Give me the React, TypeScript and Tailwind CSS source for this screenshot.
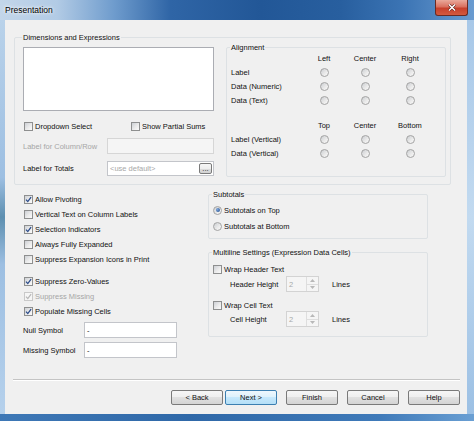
import React from "react";

function Check({ checked = false, disabled = false }: { checked?: boolean; disabled?: boolean }) {
  return (
    <span
      className={
        disabled
          ? "w-[9px] h-[9px] shrink-0 flex items-center justify-center border border-[#c9c9c9] bg-[#f6f6f6]"
          : "w-[9px] h-[9px] shrink-0 flex items-center justify-center border border-[#8e8f8f] bg-[linear-gradient(135deg,#cdd0d5_0%,#ebebeb_55%,#fbfbfb_100%)]"
      }
    >
      {checked && (
        <svg width="7" height="7" viewBox="0 0 7 7">
          <path d="M1 3.6 L2.8 5.6 L6.1 1.2" fill="none" stroke={disabled ? "#b8b8b8" : "#2b4b8a"} strokeWidth="1.3" />
        </svg>
      )}
    </span>
  );
}

function Radio({ checked = false }: { checked?: boolean }) {
  return (
    <span className="w-[9px] h-[9px] rounded-full shrink-0 flex items-center justify-center border border-[#a3a3a3] bg-[linear-gradient(135deg,#cbced2_0%,#e9e9e9_55%,#fbfbfb_100%)]">
      {checked && <span className="w-[4px] h-[4px] rounded-full bg-[radial-gradient(circle_at_35%_35%,#7fa6dc,#1d4a8a)]" />}
    </span>
  );
}

function CheckRow({ label, checked = false, disabled = false }: { label: string; checked?: boolean; disabled?: boolean }) {
  return (
    <div className="h-[15px] flex items-center gap-[2px] ml-[1px]">
      <Check checked={checked} disabled={disabled} />
      <span className={disabled ? "text-[#a6a6a6]" : ""}>{label}</span>
    </div>
  );
}

function Group({
  label,
  className,
  children,
}: {
  label: string;
  className: string;
  children?: React.ReactNode;
}) {
  return (
    <div className={"relative border border-[#dde1e4] rounded-[2px] " + className}>
      <span className="absolute left-[3px] top-[-5px] px-[1px] bg-[#f0f0f0] leading-[9px]">{label}</span>
      {children}
    </div>
  );
}

function Spinner() {
  return (
    <div className="w-[33px] h-full flex border border-[#d3d3d3] bg-[#f5f5f5]">
      <span className="flex-1 pl-[2px] text-[#a8a8a8] flex items-center">2</span>
      <div className="w-[12px] flex flex-col border-l border-[#dedede]">
        <span className="flex-1 flex items-center justify-center border-b border-[#dedede]">
          <svg width="5" height="3" viewBox="0 0 5 3">
            <path d="M0 3 L2.5 0 L5 3Z" fill="#b8b8b8" />
          </svg>
        </span>
        <span className="flex-1 flex items-center justify-center">
          <svg width="5" height="3" viewBox="0 0 5 3">
            <path d="M0 0 L2.5 3 L5 0Z" fill="#b8b8b8" />
          </svg>
        </span>
      </div>
    </div>
  );
}

function Btn({ label, focus = false, className = "" }: { label: string; focus?: boolean; className?: string }) {
  return (
    <div
      className={
        (focus
          ? "border-[#3c7fb1] bg-[linear-gradient(#eef7fd_0%,#ddf1fc_50%,#c6e8fc_50%,#b4dff7_100%)] "
          : "border-[#7a7a7a] bg-[linear-gradient(#f6f6f6_0%,#eeeeee_50%,#e0e0e0_50%,#d4d4d4_100%)] ") +
        "w-[52px] h-[15px] rounded-[2px] border flex items-center justify-center " +
        className
      }
    >
      {label}
    </div>
  );
}

const ALIGN_ROW = "h-[14px] flex items-center";

function AlignRow({ label }: { label: string }) {
  return (
    <div className={ALIGN_ROW}>
      <span className="w-[73px]">{label}</span>
      <span className="w-[40px] flex justify-center">
        <Radio />
      </span>
      <span className="w-[42px] flex justify-center">
        <Radio />
      </span>
      <span className="w-[48px] flex justify-center">
        <Radio />
      </span>
    </div>
  );
}

function AlignHead({ a, b, c }: { a: string; b: string; c: string }) {
  return (
    <div className={ALIGN_ROW}>
      <span className="w-[73px]" />
      <span className="w-[40px] text-center">{a}</span>
      <span className="w-[42px] text-center">{b}</span>
      <span className="w-[48px] text-center">{c}</span>
    </div>
  );
}

export default function App() {
  return (
    <div className="w-[474px] h-[421px] overflow-hidden flex flex-col font-['Liberation_Sans',Arial,sans-serif] text-[7.5px] leading-[9px] text-[#111111] bg-[#8fb5dd]">
      {/* Title bar */}
      <div className="h-[20px] flex items-start bg-[linear-gradient(90deg,#c3d6ea_0%,#b2cbe5_12%,#6f9ccd_24%,#2f65a6_36%,#225797_55%,#285f9f_72%,#3b74b4_85%,#6a9bd0_100%)]">
        <span className="pl-[5px] pt-[5px] text-[8.5px] leading-[10px] text-black [text-shadow:0_0_5px_#ffffff,0_0_3px_#ffffff]">
          Presentation
        </span>
        <div className="ml-auto mr-[6px] w-[33px] h-[16px] rounded-b-[3px] border border-t-0 border-[#6b2a22] bg-[linear-gradient(#e9a99b_0%,#d9705f_45%,#c7402c_55%,#d35a3f_100%)] flex items-center justify-center">
          <svg width="8" height="7" viewBox="0 0 8 7">
            <path d="M1 0.5 L7 6.5 M7 0.5 L1 6.5" stroke="#5a1d15" strokeWidth="2.6" />
            <path d="M1 0.5 L7 6.5 M7 0.5 L1 6.5" stroke="#ffffff" strokeWidth="1.5" />
          </svg>
        </div>
      </div>

      <div className="flex h-[394px]">
        <div className="w-[5px] bg-[linear-gradient(#b9d2ea_0%,#9dbfe2_40%,#5d8fb0_50%,#9dbfe2_62%,#b6d1ec_100%)]" />
        {/* Client area */}
        <div className="w-[462px] bg-[#f0f0f0] flex flex-col">
          {/* Top group */}
          <Group label="Dimensions and Expressions" className="mt-[17px] ml-[9px] w-[437px] h-[148px] [&>span:first-child]:left-[7px]">
            <div className="flex pt-[9px] pl-[8px]">
              <div className="w-[191px] flex flex-col">
                <div className="h-[64px] bg-white border border-[#abadb3]" />
                <div className="mt-[10px] h-[10px] flex items-center">
                  <div className="w-[107px] flex items-center gap-[2px] ml-[1px]">
                    <Check />
                    <span>Dropdown Select</span>
                  </div>
                  <div className="flex items-center gap-[2px]">
                    <Check />
                    <span>Show Partial Sums</span>
                  </div>
                </div>
                <div className="mt-[7px] h-[16px] flex items-center">
                  <span className="w-[84px] text-[#a6a6a6]">Label for Column/Row</span>
                  <div className="w-[107px] h-full border border-[#d6d6d6] bg-[#f5f5f5]" />
                </div>
                <div className="mt-[7px] h-[15px] flex items-center">
                  <span className="w-[84px]">Label for Totals</span>
                  <div className="w-[107px] h-full border border-[#c3c5ca] bg-white flex items-center pl-[2px]">
                    <span className="text-[#a8a8a8]">&lt;use default&gt;</span>
                    <div className="ml-auto mr-[1px] w-[13px] h-[11px] rounded-[2px] border border-[#7a7a7a] bg-[linear-gradient(#f6f6f6_0%,#eeeeee_50%,#dddddd_50%,#d2d2d2_100%)] flex items-end justify-center leading-[7px] pb-[1px]">
                      ...
                    </div>
                  </div>
                </div>
              </div>
              <Group label="Alignment" className="ml-[12px] w-[220px] h-[130px]">
                <div className="flex flex-col pt-[3px] pl-[4px]">
                  <AlignHead a="Left" b="Center" c="Right" />
                  <AlignRow label="Label" />
                  <AlignRow label="Data (Numeric)" />
                  <AlignRow label="Data (Text)" />
                  <div className="mt-[11px]">
                    <AlignHead a="Top" b="Center" c="Bottom" />
                  </div>
                  <AlignRow label="Label (Vertical)" />
                  <AlignRow label="Data (Vertical)" />
                </div>
              </Group>
            </div>
          </Group>

          {/* Lower section */}
          <div className="h-[175px] flex">
            <div className="w-[203px] pl-[18px] flex flex-col">
              <div className="mt-[7px]">
                <CheckRow label="Allow Pivoting" checked />
                <CheckRow label="Vertical Text on Column Labels" />
                <CheckRow label="Selection Indicators" checked />
                <CheckRow label="Always Fully Expanded" />
                <CheckRow label="Suppress Expansion Icons in Print" />
              </div>
              <div className="mt-[7px]">
                <CheckRow label="Suppress Zero-Values" checked />
                <CheckRow label="Suppress Missing" checked disabled />
                <CheckRow label="Populate Missing Cells" checked />
              </div>
              <div className="mt-[3px] h-[16px] flex items-center">
                <span className="w-[61px]">Null Symbol</span>
                <div className="w-[93px] h-full border border-[#c3c5ca] bg-white flex items-center pl-[2px]">-</div>
              </div>
              <div className="mt-[4px] h-[16px] flex items-center">
                <span className="w-[61px]">Missing Symbol</span>
                <div className="w-[93px] h-full border border-[#c3c5ca] bg-white flex items-center pl-[2px]">-</div>
              </div>
            </div>
            <div className="w-[220px] flex flex-col">
              <Group label="Subtotals" className="mt-[9px] h-[45px]">
                <div className="flex flex-col pt-[7px] pl-[4px]">
                  <div className="h-[16px] flex items-center gap-[2px]">
                    <Radio checked />
                    <span>Subtotals on Top</span>
                  </div>
                  <div className="h-[16px] flex items-center gap-[2px]">
                    <Radio />
                    <span>Subtotals at Bottom</span>
                  </div>
                </div>
              </Group>
              <Group label="Multiline Settings (Expression Data Cells)" className="mt-[13px] h-[85px]">
                <div className="flex flex-col pt-[10px] pl-[4px]">
                  <div className="h-[12px] flex items-center gap-[2px]">
                    <Check />
                    <span>Wrap Header Text</span>
                  </div>
                  <div className="mt-[1px] h-[16px] flex items-center">
                    <span className="ml-[17px] w-[56px]">Header Height</span>
                    <Spinner />
                    <span className="ml-[13px]">Lines</span>
                  </div>
                  <div className="mt-[7px] h-[12px] flex items-center gap-[2px]">
                    <Check />
                    <span>Wrap Cell Text</span>
                  </div>
                  <div className="h-[16px] flex items-center">
                    <span className="ml-[17px] w-[56px]">Cell Height</span>
                    <Spinner />
                    <span className="ml-[13px]">Lines</span>
                  </div>
                </div>
              </Group>
            </div>
          </div>

          {/* Separator */}
          <div className="mt-[19px] ml-[8px] w-[447px] h-[2px] border-t border-b border-t-[#c4c4c4] border-b-white" />

          {/* Buttons */}
          <div className="mt-[9px] flex justify-end pr-[7px]">
            <Btn label="< Back" />
            <Btn label="Next >" focus className="ml-[2px]" />
            <Btn label="Finish" className="ml-[9px]" />
            <Btn label="Cancel" className="ml-[9px]" />
            <Btn label="Help" className="ml-[9px]" />
          </div>
        </div>
        <div className="w-[7px] bg-[linear-gradient(#a8c8e8_0%,#c2daf0_50%,#9cc0e4_100%)]" />
      </div>
      <div className="h-[7px] bg-[linear-gradient(90deg,#3e78b6_0%,#2f68a8_40%,#3f7ab9_80%,#6a9fd3_100%)]" />
    </div>
  );
}
